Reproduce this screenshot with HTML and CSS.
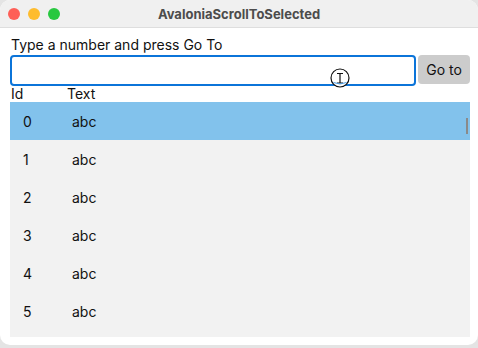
FILE: index.html
```html
<!DOCTYPE html>
<html lang="en">
<head>
    <meta charset="UTF-8">
    <title>AvaloniaScrollToSelected</title>
    <link rel="stylesheet" href="styles.css">
</head>
<body>
    <div class="window">
        <div class="titlebar">
            <div class="lights">
                <span class="light red"></span>
                <span class="light yellow"></span>
                <span class="light green"></span>
            </div>
            <div class="title">AvaloniaScrollToSelected</div>
        </div>

        <div class="content">
            <div class="prompt">Type a number and press Go To</div>
            <div class="search-row">
                <div class="textbox">
                    <svg class="cursor" width="22" height="22" viewBox="0 0 22 22">
                        <circle cx="11" cy="11" r="9" fill="#fff" stroke="#111" stroke-width="1.2"/>
                        <path d="M8 6.5h6M8 16h6M11 6.5v9.5" stroke="#111" stroke-width="1.2" fill="none"/>
                        <path d="M4.5 15.5q6.5 3 13 0" stroke="#4a9be0" stroke-width="1" fill="none"/>
                    </svg>
                </div>
                <div class="button">Go to</div>
            </div>
            <div class="header">
                <div class="col-id">Id</div>
                <div class="col-text">Text</div>
            </div>
            <div class="list">
                <div class="row selected"><div class="cell-id">0</div><div class="cell-text">abc</div></div>
                <div class="row"><div class="cell-id">1</div><div class="cell-text">abc</div></div>
                <div class="row"><div class="cell-id">2</div><div class="cell-text">abc</div></div>
                <div class="row"><div class="cell-id">3</div><div class="cell-text">abc</div></div>
                <div class="row"><div class="cell-id">4</div><div class="cell-text">abc</div></div>
                <div class="row"><div class="cell-id">5</div><div class="cell-text">abc</div></div>
                <div class="thumb"></div>
            </div>
        </div>
    </div>
</body>
</html>
```

FILE: styles.css
```css
body {
    margin: 0;
    padding: 0;
    width: 478px;
    height: 348px;
    background-color: #e4e4e4;
    font-family: Inter, "Noto Sans", sans-serif;
    overflow: hidden;
}

.window {
    height: 345px;
    background-color: #ffffff;
    border-radius: 10px;
    overflow: hidden;
    display: flex;
    flex-direction: column;
}

.titlebar {
    height: 27px;
    flex-shrink: 0;
    background-color: #f0f0f0;
    border-bottom: 1px solid #dedede;
    display: flex;
    align-items: center;
    position: relative;
}

.lights {
    display: flex;
    gap: 8px;
    padding-left: 8px;
}

.light {
    width: 12px;
    height: 12px;
    border-radius: 50%;
}

.red { background-color: #fe5f57; }
.yellow { background-color: #febc2e; }
.green { background-color: #28c840; }

.title {
    position: absolute;
    left: 0;
    right: 0;
    text-align: center;
    font-size: 13px;
    font-weight: bold;
    color: #4c4c4c;
}

.content {
    flex: 1;
    display: flex;
    flex-direction: column;
    padding: 8px 8px 8px 10px;
}

.prompt {
    font-size: 14px;
    line-height: 17px;
    color: #111;
    padding-left: 1px;
    margin-bottom: 2px;
}

.search-row {
    display: flex;
    align-items: flex-start;
    gap: 2px;
}

.textbox {
    flex: 1;
    height: 27px;
    border: 2px solid #0b74d9;
    border-radius: 4px;
    position: relative;
}

.cursor {
    position: absolute;
    left: 317px;
    top: 10px;
}

.button {
    width: 52px;
    height: 29px;
    background-color: #cccccc;
    border-radius: 4px;
    display: flex;
    align-items: center;
    justify-content: center;
    font-size: 14px;
    color: #111;
}

.header {
    display: flex;
    font-size: 14px;
    line-height: 16px;
    color: #111;
    padding-left: 1px;
}

.col-id {
    width: 56px;
}

.list {
    flex: 1;
    background-color: #f2f2f2;
    position: relative;
    overflow: hidden;
}

.row {
    height: 38px;
    display: flex;
    align-items: center;
    font-size: 14px;
    color: #111;
}

.row.selected {
    background-color: #82c2ec;
}

.cell-id {
    width: 62px;
    padding-left: 13px;
    box-sizing: border-box;
}

.thumb {
    position: absolute;
    right: 2px;
    top: 16px;
    width: 2px;
    height: 16px;
    background-color: #8a8a8a;
}
```
